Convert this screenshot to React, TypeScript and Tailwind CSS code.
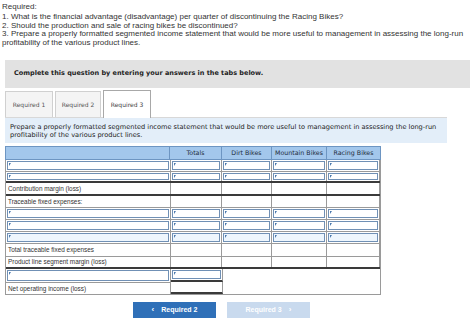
import React from "react";

const V = { fontFamily: '"DejaVu Sans", Verdana, sans-serif' };
const A = { fontFamily: '"Liberation Sans", Arial, sans-serif' };

function Mark() {
  return (
    <div
      className="absolute left-[1px] top-[1px] h-0 w-0 border-l-[2px] border-t-[3px] border-l-transparent border-t-[#4b79ad]"
      style={{ transform: "scaleX(-1)" }}
    />
  );
}

function InputCell({ w, blue }: { w: string; blue?: boolean }) {
  return (
    <div className={`${w} h-full border-r border-[#9a9a9a] p-[1px]`}>
      <div className={`relative h-full w-full border border-[#7090b5] ${blue ? "bg-[#eef6fd]" : "bg-white"}`}>
        <Mark />
      </div>
    </div>
  );
}

function PlainCell({ w }: { w: string }) {
  return <div className={`${w} h-full border-r border-[#9a9a9a] bg-white`} />;
}

const cols = ["w-[52px]", "w-[50px]", "w-[55px]", "w-[53px]"];

function InputRow({ h = "h-[12px]", blue, thickBottom }: { h?: string; blue?: boolean; thickBottom?: boolean }) {
  return (
    <div className={`flex ${h} ${thickBottom ? "border-b-2 border-b-[#3a3a3a]" : "border-b border-b-[#9a9a9a]"}`}>
      <InputCell w="w-[165px]" blue={blue} />
      {cols.map((c, i) => (
        <InputCell key={i} w={c} blue={blue} />
      ))}
    </div>
  );
}

function LabelRow({ label, h = "h-[12px]", thickBottom }: { label: string; h?: string; thickBottom?: boolean }) {
  return (
    <div className={`flex ${h} ${thickBottom ? "border-b-2 border-b-[#3a3a3a]" : "border-b border-b-[#9a9a9a]"}`}>
      <div className="flex w-[165px] h-full items-center border-r border-[#9a9a9a] pl-[2px] text-[6.4px] text-[#333]" style={A}>
        {label}
      </div>
      {cols.map((c, i) => (
        <PlainCell key={i} w={c} />
      ))}
    </div>
  );
}

export default function App() {
  return (
    <div className="relative h-[335px] w-[474px] overflow-hidden bg-white text-[#222]">
      <div className="pl-[2px] pt-[3px] text-[8px] leading-[8.5px] text-[#333]" style={A}>
        <div className="mb-[1.5px]">Required:</div>
        <div>1. What is the financial advantage (disadvantage) per quarter of discontinuing the Racing Bikes?</div>
        <div>2. Should the production and sale of racing bikes be discontinued?</div>
        <div>3. Prepare a properly formatted segmented income statement that would be more useful to management in assessing the long-run</div>
        <div>profitability of the various product lines.</div>
      </div>

      <div className="mx-[5px] mt-[13px] flex h-[28px] w-[465px] items-center bg-[#e2e2e2] pl-[9px]">
        <span className="text-[6.5px] font-bold text-[#222]" style={V}>
          Complete this question by entering your answers in the tabs below.
        </span>
      </div>

      <div className="ml-[5px] mt-[3px] flex h-[27px] w-[442px] items-end border-b border-[#d8d8d8]">
        <div className="mr-[2px] flex h-[26px] w-[48px] items-center justify-center border border-b-0 border-[#d0d0d0] bg-[#f4f4f4] text-[6px] text-[#555]" style={V}>
          Required 1
        </div>
        <div className="mr-[2px] flex h-[26px] w-[46px] items-center justify-center border border-b-0 border-[#d0d0d0] bg-[#f4f4f4] text-[6px] text-[#555]" style={V}>
          Required 2
        </div>
        <div className="-mb-[1px] flex h-[28px] w-[48px] items-center justify-center border border-b-0 border-[#a8a8a8] bg-white text-[6px] text-[#444]" style={V}>
          Required 3
        </div>
      </div>

      <div className="ml-[5px] flex h-[25px] w-[442px] flex-col justify-center bg-[#e3eef9] pl-[5px] text-[6.6px] leading-[8px] text-[#222]" style={V}>
        <div>Prepare a properly formatted segmented income statement that would be more useful to management in assessing the long-run</div>
        <div>profitability of the various product lines.</div>
      </div>

      <div className="ml-[5px] mt-[3px] w-[376px] border-l border-r border-[#9a9a9a]">
        <div className="flex h-[14px] border border-[#6d95c2] bg-[#a3c7ec] -mx-[1px]">
          <div className="w-[164px] border-r border-[#6d95c2]" />
          {["Totals", "Dirt Bikes", "Mountain Bikes", "Racing Bikes"].map((t, i) => (
            <div
              key={t}
              className={`${cols[i]} flex items-center justify-center text-[6.3px] text-[#1e2b3a] ${i < 3 ? "border-r border-[#6d95c2]" : ""}`}
              style={V}
            >
              {t}
            </div>
          ))}
        </div>
        <InputRow />
        <InputRow thickBottom h="h-[11px]" />
        <LabelRow label="Contribution margin (loss)" h="h-[13px]" thickBottom />
        <LabelRow label="Traceable fixed expenses:" />
        <InputRow />
        <InputRow />
        <InputRow blue />
        <LabelRow label="Total traceable fixed expenses" h="h-[13px]" />
        <LabelRow label="Product line segment margin (loss)" thickBottom />
        <div className="flex h-[13px]">
          <InputCell w="w-[165px]" />
          <div className="w-[52px] h-full border-r border-[#9a9a9a] border-b-2 border-b-[#3a3a3a] p-[1px]">
            <div className="relative h-full w-full border border-[#7090b5] bg-white">
              <Mark />
            </div>
          </div>
          <div className="flex-1" />
        </div>
        <div className="flex h-[13px] border-b border-[#9a9a9a]">
          <div className="flex w-[165px] h-full items-center border-r border-t border-[#9a9a9a] pl-[2px] text-[6.4px] text-[#333]" style={A}>
            Net operating income (loss)
          </div>
          <div className="w-[52px] h-full border-r border-[#9a9a9a] border-b-2 border-b-[#3a3a3a]" />
          <div className="flex-1" />
        </div>
      </div>

      <div className="ml-[133px] mt-[7px] flex gap-[11px]">
        <div className="flex h-[16px] w-[83px] items-center justify-center gap-[7px] bg-[#2f70b8] text-[7px] font-bold text-white" style={A}>
          <span className="text-[8px] leading-none">‹</span>
          <span>Required 2</span>
        </div>
        <div className="flex h-[16px] w-[83px] items-center justify-center gap-[7px] bg-[#c9daee] text-[7px] font-bold text-white" style={A}>
          <span>Required 3</span>
          <span className="text-[8px] leading-none">›</span>
        </div>
      </div>
    </div>
  );
}
